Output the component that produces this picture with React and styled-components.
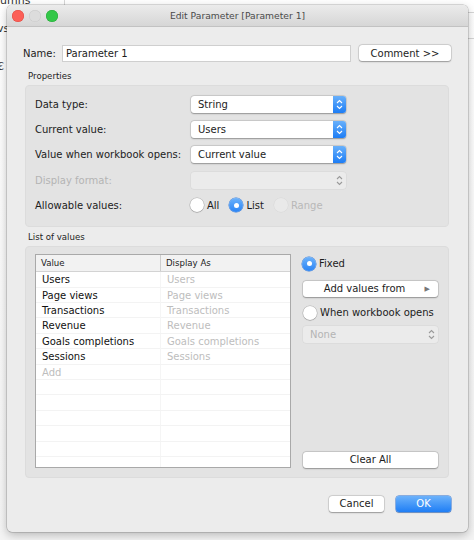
import React from 'react';
import styled, { createGlobalStyle } from 'styled-components';

const GlobalStyle = createGlobalStyle`
  html, body {
    margin: 0;
    padding: 0;
    background: #f6f6f6;
    font-family: "DejaVu Sans", "Liberation Sans", sans-serif;
    color: #1c1c1c;
  }
  #root {
    width: 474px;
    height: 540px;
    overflow: hidden;
  }
`;

const values = ['Users', 'Page views', 'Transactions', 'Revenue', 'Goals completions', 'Sessions'];

function Stepper({ disabled }) {
	return (
		<StepBox disabled={disabled}>
			<svg width="7" height="11" viewBox="0 0 7 11">
				<path
					d="M1 4 L3.5 1.5 L6 4 M1 7 L3.5 9.5 L6 7"
					fill="none"
					stroke={disabled ? '#9a9a9a' : '#fff'}
					strokeWidth="1.1"
				/>
			</svg>
		</StepBox>
	);
}

function Select({ value, disabled, gap }) {
	return (
		<SelectBox disabled={disabled} gap={gap}>
			<span>{value}</span>
			<Stepper disabled={disabled} />
		</SelectBox>
	);
}

function Radio({ checked, disabled, label, gap }) {
	return (
		<RadioItem disabled={disabled} gap={gap}>
			<RadioDot checked={checked} disabled={disabled} />
			{label}
		</RadioItem>
	);
}

export default function App() {
	return (
		<>
			<GlobalStyle />
			<Desktop>
				<BackApp>
					<BackText style={{ left: 0, top: -6 }}>umns</BackText>
					<BackText style={{ left: -3, top: 22 }}>vs</BackText>
					<BackText style={{ left: -3, top: 60 }}>€</BackText>
				</BackApp>
				<Dialog>
					<TitleBar>
						<Lights>
							<Light color="#fc5f57" edge="#de4a42" />
							<Light color="#dcdcdc" edge="#c9c9c9" />
							<Light color="#33c748" edge="#27a83a" />
						</Lights>
						<Title>Edit Parameter [Parameter 1]</Title>
					</TitleBar>
					<Body>
						<NameRow>
							<NameLabel>Name:</NameLabel>
							<TextInput>Parameter 1</TextInput>
							<PushButton width="92px">Comment &gt;&gt;</PushButton>
						</NameRow>

						<GroupTitle top="8px">Properties</GroupTitle>
						<GroupBox>
							<PropGrid>
								<FieldLabel>Data type:</FieldLabel>
								<Select value="String" />
								<FieldLabel>Current value:</FieldLabel>
								<Select value="Users" />
								<FieldLabel>Value when workbook opens:</FieldLabel>
								<Select value="Current value" />
								<FieldLabel disabled>Display format:</FieldLabel>
								<Select value="" disabled />
								<FieldLabel>Allowable values:</FieldLabel>
								<RadioRow>
									<Radio label="All" />
									<Radio label="List" checked />
									<Radio label="Range" disabled />
								</RadioRow>
							</PropGrid>
						</GroupBox>

						<GroupTitle top="4px">List of values</GroupTitle>
						<ListGroup>
							<Table>
								<HeadRow>
									<HeadCell>Value</HeadCell>
									<HeadCell>Display As</HeadCell>
								</HeadRow>
								{values.map((v) => (
									<Row key={v}>
										<Cell>{v}</Cell>
										<Cell muted>{v}</Cell>
									</Row>
								))}
								<Row>
									<Cell muted>Add</Cell>
									<Cell />
								</Row>
								{Array.from({ length: 7 }).map((_, i) => (
									<Row key={i}>
										<Cell />
										<Cell />
									</Row>
								))}
							</Table>
							<SideColumn>
								<Radio label="Fixed" checked />
								<PushButton full gap="10px">
									<ButtonLabel>Add values from</ButtonLabel>
									<Arrow>▶</Arrow>
								</PushButton>
								<Radio label="When workbook opens" gap="9px" />
								<Select value="None" disabled gap="6px" />
								<Spacer />
								<PushButton full>Clear All</PushButton>
							</SideColumn>
						</ListGroup>

						<Footer>
							<PushButton width="55px">Cancel</PushButton>
							<PushButton width="55px" primary>
								OK
							</PushButton>
						</Footer>
					</Body>
				</Dialog>
			</Desktop>
		</>
	);
}

const Desktop = styled.div`
	position: relative;
	width: 474px;
	height: 540px;
	padding: 5px 6px 0 7px;
	box-sizing: border-box;
	background: linear-gradient(#ffffff, #f4f4f4);
`;

const BackApp = styled.div`
	position: absolute;
	inset: 0;
	&::before {
		content: '';
		position: absolute;
		left: 64px;
		top: 0;
		width: 1px;
		height: 6px;
		background: #d6d6d6;
	}
	&::after {
		content: '';
		position: absolute;
		right: 0;
		top: 12px;
		width: 10px;
		height: 1px;
		background: #d6d6d6;
		box-shadow: 0 26px 0 #d6d6d6;
	}
`;

const BackText = styled.div`
	position: absolute;
	font-size: 11px;
	color: #333;
`;

const Dialog = styled.div`
	position: relative;
	width: 461px;
	height: 527px;
	background: #ececec;
	border-radius: 5px;
	box-shadow: 0 0 0 0.5px rgba(0, 0, 0, 0.25), 0 3px 10px rgba(0, 0, 0, 0.25);
	overflow: hidden;
	display: flex;
	flex-direction: column;
`;

const TitleBar = styled.div`
	position: relative;
	height: 21px;
	flex-shrink: 0;
	display: flex;
	align-items: center;
	justify-content: center;
	background: linear-gradient(#ebebeb, #d6d6d6);
	border-bottom: 1px solid #c2c2c2;
`;

const Lights = styled.div`
	position: absolute;
	left: 5px;
	top: 5px;
	display: flex;
	gap: 5px;
`;

const Light = styled.span`
	width: 12px;
	height: 12px;
	border-radius: 50%;
	background: ${(p) => p.color};
	box-shadow: inset 0 0 0 0.5px ${(p) => p.edge};
`;

const Title = styled.div`
	font-size: 9.2px;
	color: #4a4a4a;
`;

const Body = styled.div`
	flex: 1;
	padding: 17px 17px 0 16px;
	display: flex;
	flex-direction: column;
`;

const NameRow = styled.div`
	display: flex;
	align-items: center;
	height: 18px;
	gap: 8px;
`;

const NameLabel = styled.div`
	font-size: 10px;
	width: 31px;
`;

const TextInput = styled.div`
	flex: 1;
	height: 17px;
	box-sizing: border-box;
	background: #fff;
	border: 1px solid #cfcfcf;
	font-size: 10px;
	line-height: 15px;
	padding-left: 3px;
`;

const PushButton = styled.div`
	width: ${(p) => (p.full ? 'auto' : p.width || 'auto')};
	height: 16px;
	margin-top: ${(p) => p.gap || '0'};
	box-sizing: border-box;
	display: flex;
	align-items: center;
	justify-content: center;
	position: relative;
	font-size: 10px;
	border-radius: 3px;
	background: ${(p) => (p.primary ? 'linear-gradient(#6cb2fb, #1f7ef5)' : '#fff')};
	color: ${(p) => (p.primary ? '#fff' : '#1c1c1c')};
	box-shadow: ${(p) =>
		p.primary
			? '0 0 0 0.5px #2f74d8, 0 0.5px 1px rgba(0,0,0,0.3)'
			: '0 0 0 0.5px rgba(0,0,0,0.15), 0 0.5px 1.5px rgba(0,0,0,0.3)'};
`;

const ButtonLabel = styled.span`
	margin-left: -12px;
`;

const Arrow = styled.span`
	position: absolute;
	right: 8px;
	font-size: 7px;
	color: #777;
`;

const GroupTitle = styled.div`
	font-size: 8.6px;
	margin: ${(p) => p.top} 0 0 5px;
	height: 12px;
	line-height: 12px;
`;

const GroupBox = styled.div`
	margin: 3px 2px 0 2px;
	background: #e3e3e3;
	border: 1px solid #dcdcdc;
	border-radius: 4px;
	padding: 10px 0 12px 9px;
`;

const PropGrid = styled.div`
	display: grid;
	grid-template-columns: 156px 155px;
	grid-auto-rows: 17px;
	row-gap: 8.2px;
	align-items: center;
`;

const FieldLabel = styled.div`
	font-size: 10px;
	color: ${(p) => (p.disabled ? '#b4b4b4' : '#1c1c1c')};
`;

const SelectBox = styled.div`
	height: 17px;
	margin-top: ${(p) => p.gap || '0'};
	box-sizing: border-box;
	display: flex;
	align-items: stretch;
	border-radius: 3px;
	background: ${(p) => (p.disabled ? '#ebebeb' : '#fff')};
	box-shadow: ${(p) =>
		p.disabled
			? '0 0 0 0.5px rgba(0,0,0,0.06)'
			: '0 0 0 0.5px rgba(0,0,0,0.12), 0 0.5px 1.5px rgba(0,0,0,0.3)'};
	font-size: 10px;
	color: ${(p) => (p.disabled ? '#b4b4b4' : '#1c1c1c')};
	span {
		flex: 1;
		padding-left: 7px;
		line-height: 17px;
	}
`;

const StepBox = styled.div`
	width: 13px;
	display: flex;
	align-items: center;
	justify-content: center;
	border-radius: 0 3px 3px 0;
	background: ${(p) => (p.disabled ? 'transparent' : 'linear-gradient(#68b0fb, #1d7df5)')};
`;

const RadioRow = styled.div`
	display: flex;
	align-items: center;
	gap: 10px;
	margin-left: -1px;
`;

const RadioItem = styled.div`
	display: flex;
	align-items: center;
	gap: 3px;
	margin-top: ${(p) => p.gap || '0'};
	font-size: 10px;
	color: ${(p) => (p.disabled ? '#b8b8b8' : '#1c1c1c')};
`;

const RadioDot = styled.span`
	width: 14px;
	height: 14px;
	box-sizing: border-box;
	border-radius: 50%;
	display: flex;
	align-items: center;
	justify-content: center;
	background: ${(p) =>
		p.checked ? 'linear-gradient(#6cb2fb, #2a84f5)' : p.disabled ? '#e9e9e9' : '#fff'};
	box-shadow: ${(p) =>
		p.checked
			? '0 0 0 0.5px #3278d8'
			: p.disabled
			? '0 0 0 0.5px rgba(0,0,0,0.05)'
			: '0 0 0 0.5px rgba(0,0,0,0.2), 0 0.5px 1px rgba(0,0,0,0.25)'};
	&::after {
		content: '';
		display: ${(p) => (p.checked ? 'block' : 'none')};
		width: 5px;
		height: 5px;
		border-radius: 50%;
		background: #fff;
	}
`;

const ListGroup = styled(GroupBox)`
	display: flex;
	gap: 12px;
	padding: 7px 10px 9px 9px;
	height: 232px;
	box-sizing: border-box;
`;

const Table = styled.div`
	width: 254px;
	flex-shrink: 0;
	background: #fff;
	border: 1px solid #a9a9a9;
	overflow: hidden;
	display: grid;
	grid-template-rows: 17.5px;
	grid-auto-rows: 15.4px;
	align-content: start;
`;

const HeadRow = styled.div`
	display: grid;
	grid-template-columns: 125px 1fr;
	background: #f2f2f2;
	border-bottom: 1px solid #d3d3d3;
	box-sizing: border-box;
`;

const HeadCell = styled.div`
	font-size: 8.6px;
	line-height: 16px;
	padding-left: 5px;
	border-right: 1px solid #cdcdcd;
	&:last-child {
		border-right: 0;
	}
`;

const Row = styled.div`
	display: grid;
	grid-template-columns: 125px 1fr;
	border-bottom: 1px solid #f3f3f3;
	box-sizing: border-box;
`;

const Cell = styled.div`
	font-size: 10px;
	line-height: 15px;
	padding-left: 6px;
	color: ${(p) => (p.muted ? '#bdbdbd' : '#111')};
	border-right: 1px solid #f5f5f5;
	&:last-child {
		border-right: 0;
	}
`;

const SideColumn = styled.div`
	flex: 1;
	display: flex;
	flex-direction: column;
	padding-top: 3px;
	& > ${RadioItem}:first-child {
		margin-left: -1px;
	}
`;

const Spacer = styled.div`
	flex: 1;
`;

const Footer = styled.div`
	display: flex;
	justify-content: flex-end;
	gap: 12px;
	margin-top: 18px;
`;
